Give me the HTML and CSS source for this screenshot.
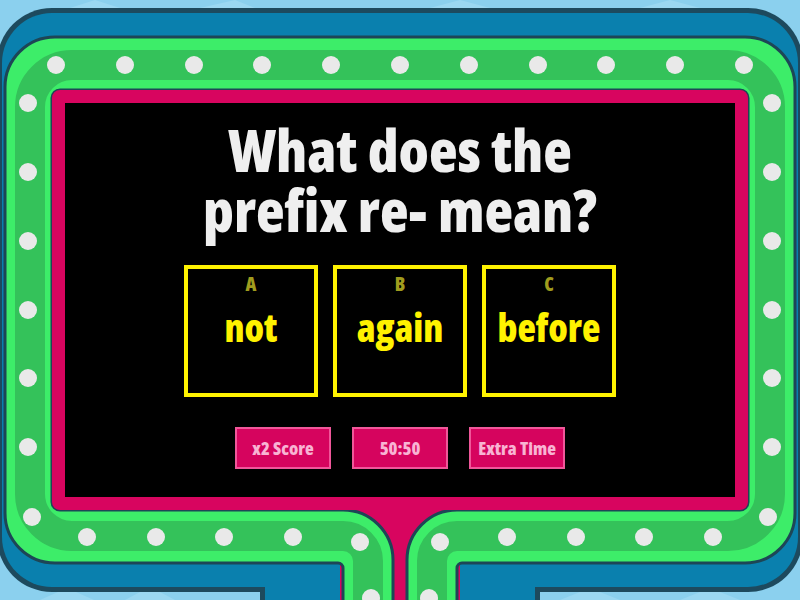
FILE: index.html
```html
<!DOCTYPE html>
<html lang="en">
<head>
<meta charset="utf-8">
<title>Quiz</title>
<link rel="stylesheet" href="styles.css">
</head>
<body>
<div class="stage">
  <svg class="backdrop" width="800" height="600" viewBox="0 0 800 600" aria-hidden="true">
    <rect width="800" height="600" fill="#8bd0ee"/>
    <g fill="#9bd8f2">
      <polygon points="70,8 95,0 120,8"/>
      <polygon points="200,8 235,0 255,8"/>
      <polygon points="430,8 460,0 490,8"/>
      <polygon points="640,8 670,0 700,8"/>
      <polygon points="40,600 58,592 76,592 94,600"/>
      <polygon points="125,600 140,592 160,592 175,600"/>
      <polygon points="560,600 580,592 600,592 620,600"/>
      <polygon points="680,600 700,592 720,592 740,600"/>
    </g>
    <rect x="-3" y="8" width="806" height="584" rx="55" fill="#1d4a5e"/>
    <rect x="260" y="500" width="280" height="110" fill="#1d4a5e"/>
    <rect x="2" y="13" width="796" height="574" rx="50" fill="#0a80ae"/>
    <rect x="265" y="500" width="270" height="110" fill="#0a80ae"/>
    <rect x="340" y="480" width="120" height="130" fill="#d8055f"/>
    <path fill="#3ded69" fill-rule="evenodd" stroke="#1d4656" stroke-width="3"
      d="M55 37 H745 A50 50 0 0 1 795 87 V513 A50 50 0 0 1 745 563 H462 A5 5 0 0 0 457 568 V610 H343 V568 A5 5 0 0 0 338 563 H55 A50 50 0 0 1 5 513 V87 A50 50 0 0 1 55 37 Z
         M60 90 H740 A8 8 0 0 1 748 98 V502 A8 8 0 0 1 740 510 H457 A50 50 0 0 0 407 560 V605 H393 V560 A50 50 0 0 0 343 510 H60 A8 8 0 0 1 52 502 V98 A8 8 0 0 1 60 90 Z"/>
    <path fill="none" stroke="#34c25a" stroke-width="30"
      d="M368 610 V561 A25 25 0 0 0 343 536 H72 A42 42 0 0 1 30 494 V107 A42 42 0 0 1 72 65 H728 A42 42 0 0 1 770 107 V494 A42 42 0 0 1 728 536 H457 A25 25 0 0 0 432 561 V610"/>
    <g fill="#e9e9e9">
      <circle cx="56" cy="65" r="9"/><circle cx="125" cy="65" r="9"/><circle cx="194" cy="65" r="9"/>
      <circle cx="262" cy="65" r="9"/><circle cx="331" cy="65" r="9"/><circle cx="400" cy="65" r="9"/>
      <circle cx="469" cy="65" r="9"/><circle cx="538" cy="65" r="9"/><circle cx="606" cy="65" r="9"/>
      <circle cx="675" cy="65" r="9"/><circle cx="744" cy="65" r="9"/>
      <circle cx="28" cy="103" r="9"/><circle cx="28" cy="172" r="9"/><circle cx="28" cy="241" r="9"/>
      <circle cx="28" cy="310" r="9"/><circle cx="28" cy="378" r="9"/><circle cx="28" cy="447" r="9"/>
      <circle cx="32" cy="517" r="9"/>
      <circle cx="772" cy="103" r="9"/><circle cx="772" cy="172" r="9"/><circle cx="772" cy="241" r="9"/>
      <circle cx="772" cy="310" r="9"/><circle cx="772" cy="378" r="9"/><circle cx="772" cy="447" r="9"/>
      <circle cx="768" cy="517" r="9"/>
      <circle cx="87" cy="537" r="9"/><circle cx="156" cy="537" r="9"/><circle cx="224" cy="537" r="9"/>
      <circle cx="293" cy="537" r="9"/><circle cx="360" cy="542" r="9"/>
      <circle cx="440" cy="542" r="9"/><circle cx="507" cy="537" r="9"/><circle cx="576" cy="537" r="9"/>
      <circle cx="644" cy="537" r="9"/><circle cx="713" cy="537" r="9"/>
      <circle cx="371" cy="598" r="9"/><circle cx="429" cy="598" r="9"/>
    </g>
  </svg>
  <main class="screen">
    <h1 class="question">What does the<br>prefix re- mean?</h1>
    <div class="answers">
      <div class="answer"><span class="letter">A</span><span class="answer-text">not</span></div>
      <div class="answer"><span class="letter">B</span><span class="answer-text">again</span></div>
      <div class="answer"><span class="letter">C</span><span class="answer-text">before</span></div>
    </div>
    <div class="powerups">
      <div class="power">x2 Score</div>
      <div class="power">50:50</div>
      <div class="power">Extra Time</div>
    </div>
  </main>
</div>
</body>
</html>
```
FILE: styles.css
```css
* { box-sizing: border-box; }
html, body { margin: 0; padding: 0; }
body {
  background: #8bd0ee;
  font-family: "Open Sans", "DejaVu Sans Condensed", sans-serif;
  font-stretch: 75%;
  font-weight: 800;
}
.stage {
  position: relative;
  width: 800px;
  height: 600px;
  overflow: hidden;
}
.backdrop {
  position: absolute;
  top: 0;
  left: 0;
  display: block;
}
.screen {
  position: relative;
  margin: 90px 0 0 52px;
  width: 696px;
  height: 420px;
  border: 13px solid #d8055f;
  border-radius: 8px;
  background: #000;
  display: flex;
  flex-direction: column;
  align-items: center;
  padding-top: 16px;
}
.question {
  margin: 0;
  font-size: 59px;
  line-height: 60px;
  font-weight: 800;
  color: #efefef;
  text-align: center;
}
.answers {
  display: flex;
  gap: 15px;
  margin-top: 26px;
}
.answer {
  width: 134px;
  height: 132px;
  border: 4px solid #fff200;
  display: flex;
  flex-direction: column;
  align-items: center;
}
.letter {
  margin-top: 6px;
  font-size: 19px;
  line-height: 18px;
  color: #a09c1e;
}
.answer-text {
  margin-top: 14px;
  font-size: 38px;
  line-height: 40px;
  color: #fff200;
}
.powerups {
  display: flex;
  gap: 21px;
  margin-top: 30px;
}
.power {
  width: 96px;
  height: 42px;
  background: #d6045e;
  border: 2px solid #f0579a;
  color: #f8b4d3;
  font-size: 18px;
  white-space: nowrap;
  display: flex;
  align-items: center;
  justify-content: center;
}
```
